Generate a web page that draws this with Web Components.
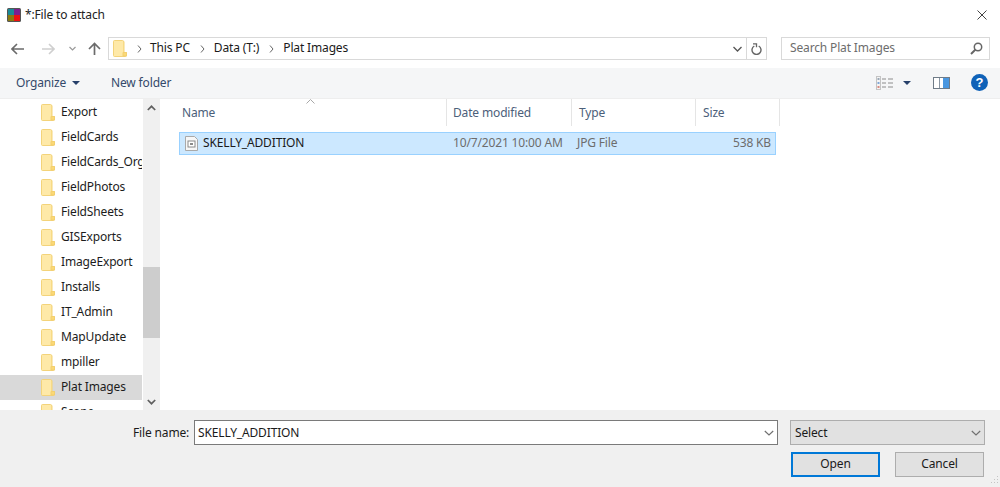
<!DOCTYPE html>
<html>
<head>
<meta charset="utf-8">
<title>File to attach</title>
<style>
  html, body { margin: 0; padding: 0; background: #fff; }
  body { font: 12px "Noto Sans", "Open Sans", sans-serif; letter-spacing: -0.15px; color: #1a1a1a; overflow: hidden; }
</style>
</head>
<body>
<file-dialog>
  <title-bar slot="title">*:File to attach</title-bar>
  <nav-bar slot="nav"></nav-bar>
  <tool-bar slot="tools"></tool-bar>
  <folder-tree slot="tree">
    <tree-item>Export</tree-item>
    <tree-item>FieldCards</tree-item>
    <tree-item>FieldCards_Org</tree-item>
    <tree-item>FieldPhotos</tree-item>
    <tree-item>FieldSheets</tree-item>
    <tree-item>GISExports</tree-item>
    <tree-item>ImageExport</tree-item>
    <tree-item>Installs</tree-item>
    <tree-item>IT_Admin</tree-item>
    <tree-item>MapUpdate</tree-item>
    <tree-item>mpiller</tree-item>
    <tree-item selected>Plat Images</tree-item>
    <tree-item>Scope</tree-item>
  </folder-tree>
  <file-list slot="list">
    <file-row name="SKELLY_ADDITION" date="10/7/2021 10:00 AM" type="JPG File" size="538 KB"></file-row>
  </file-list>
  <dialog-footer slot="footer"></dialog-footer>
</file-dialog>

<script>
const FOLDER = `<svg width="14" height="17" viewBox="0 0 14 17"><path d="M.5 1.500a1 1 0 0 1 1-1h8l1.500 1v11h2.500v3a1 1 0 0 1-1 1h-11a1 1 0 0 1-1-1z" fill="#fde38f" stroke="#f3d37a"/><path d="M1 1h9v11.500h-.5V16H1z" fill="#fee9a8"/><path d="M10 12.500h3.500V16H10z" fill="#fbd976" stroke="#f0cb68" stroke-width=".6"/></svg>`;

class FileDialog extends HTMLElement {
  connectedCallback() {
    this.attachShadow({ mode: 'open' });
    this.shadowRoot.innerHTML = `
      <style>
        :host { display: flex; flex-direction: column; width: 1000px; height: 487px; overflow: hidden; background: #fff; }
        .main { display: flex; height: 312px; overflow: hidden; }
      </style>
      <slot name="title"></slot>
      <slot name="nav"></slot>
      <slot name="tools"></slot>
      <div class="main">
        <slot name="tree"></slot>
        <slot name="list"></slot>
      </div>
      <slot name="footer"></slot>`;
  }
}

class TitleBar extends HTMLElement {
  connectedCallback() {
    this.attachShadow({ mode: 'open' });
    this.shadowRoot.innerHTML = `
      <style>
        :host { display: flex; align-items: center; height: 30px; padding: 0 13px 0 7px; box-sizing: border-box; color: #222; }
        svg { display: block; }
        .logo { margin-right: 4px; }
        .text { flex: 1; }
      </style>
      <svg class="logo" width="14" height="14" viewBox="0 0 14 14">
        <rect width="14" height="14" rx="1.500" fill="#555"/>
        <rect x="1" y="1" width="6" height="6" fill="#1b8a96"/>
        <rect x="7" y="1" width="6" height="6" fill="#7d1f8e"/>
        <rect x="1" y="7" width="6" height="6" fill="#8a7a10"/>
        <rect x="7" y="7" width="6" height="6" fill="#ee1111"/>
      </svg>
      <span class="text"><slot></slot></span>
      <svg width="10" height="10" viewBox="0 0 10 10"><path d="M.5.5l9 9M9.500.5l-9 9" stroke="#444" fill="none"/></svg>`;
  }
}

class NavBar extends HTMLElement {
  connectedCallback() {
    this.attachShadow({ mode: 'open' });
    const sep = `<svg class="sep" width="5" height="8" viewBox="0 0 5 8"><path d="M1 .5l3 3.500-3 3.500" fill="none" stroke="#666"/></svg>`;
    this.shadowRoot.innerHTML = `
      <style>
        :host { display: flex; align-items: center; height: 38px; padding: 0 10px 0 11px; }
        svg { display: block; flex: none; }
        .arrows { display: flex; align-items: center; width: 97px; flex: none; }
        .box { display: flex; align-items: center; box-sizing: border-box; height: 23px; border: 1px solid #d9d9d9; background: #fff; color: #1a1a1a; }
        .addr { flex: 1; padding-left: 4px; margin-right: 14px; }
        .crumbs { flex: 1; display: flex; align-items: center; }
        .box span { padding-bottom: 2px; }
        .sep { margin: 0 9px 0 10px; }
        .sep.first { margin-right: 8px; }
        .drop { width: 26px; display: flex; justify-content: flex-end; padding-right: 4px; box-sizing: border-box; }
        .refresh { width: 19px; height: 21px; border-left: 1px solid #d9d9d9; display: flex; align-items: center; justify-content: center; }
        .search { width: 209px; flex: none; padding: 0 6px 0 8px; color: #6d6d6d; justify-content: space-between; }
      </style>
      <div class="arrows">
        <svg width="13" height="12" viewBox="0 0 13 12" style="margin-right:18px"><path d="M6 1L1 6l5 5M1 6h12" fill="none" stroke="#6b6b6b" stroke-width="1.600"/></svg>
        <svg width="13" height="12" viewBox="0 0 13 12" style="margin-right:14px"><path d="M7 1l5 5-5 5M12 6H0" fill="none" stroke="#cfcfcf" stroke-width="1.600"/></svg>
        <svg width="7" height="5" viewBox="0 0 7 5" style="margin-right:12px"><path d="M.5 1l3 3 3-3" fill="none" stroke="#9a9a9a" stroke-width="1.200"/></svg>
        <svg width="13" height="13" viewBox="0 0 13 13"><path d="M1 7l5.500-5.500L12 7M6.500 1.500V13" fill="none" stroke="#6b6b6b" stroke-width="1.700"/></svg>
      </div>
      <div class="box addr">
        <div class="crumbs">
          ${FOLDER}${sep.replace('class="sep"', 'class="sep first"')}<span>This PC</span>${sep}<span>Data (T:)</span>${sep}<span>Plat Images</span>
        </div>
        <div class="drop"><svg width="9" height="6" viewBox="0 0 9 6"><path d="M.5 1l4 4 4-4" fill="none" stroke="#555" stroke-width="1.300"/></svg></div>
        <div class="refresh"><svg width="11" height="12" viewBox="0 0 11 12"><path d="M3.300 3a4.500 4.500 0 1 0 4.400 0" fill="none" stroke="#666" stroke-width="1.400"/><path d="M2 .8h3.500v3.500" fill="none" stroke="#666" stroke-width="1.300"/></svg></div>
      </div>
      <div class="box search">
        <span>Search Plat Images</span>
        <svg width="13" height="13" viewBox="0 0 13 13"><circle cx="8" cy="5" r="3.700" fill="none" stroke="#666" stroke-width="1.500"/><path d="M5.500 7.500L1 12" stroke="#666" stroke-width="2"/></svg>
      </div>`;
  }
}

class ToolBar extends HTMLElement {
  connectedCallback() {
    this.attachShadow({ mode: 'open' });
    this.shadowRoot.innerHTML = `
      <style>
        :host { display: flex; align-items: center; height: 30px; padding: 0 12px 0 16px; background: #f5f6f7; border-bottom: 1px solid #eeeeee; color: #34496a; }
        svg { display: block; flex: none; }
        .org { display: flex; align-items: center; width: 95px; }
        .org svg { margin-left: 6px; }
        .new { flex: 1; }
        .caret { margin: 0 22px 0 10px; }
        .pane { margin-right: 21px; }
      </style>
      <div class="org"><span>Organize</span><svg width="8" height="4" viewBox="0 0 8 4"><path d="M0 0h8L4 4z" fill="#26406a"/></svg></div>
      <span class="new">New folder</span>
      <svg width="17" height="14" viewBox="0 0 17 14">
        <rect x=".5" y=".5" width="4" height="13" fill="#f4f4f4" stroke="#c4c4c4"/>
        <rect x="1.500" y="2" width="2" height="2" fill="#9aa7b5"/><rect x="1.500" y="6" width="2" height="2" fill="#7fa6d6"/><rect x="1.500" y="10" width="2" height="2" fill="#d98a80"/>
        <path d="M6 3h4M12 3h5M6 7h4M12 7h5M6 11h4M12 11h5" stroke="#8c8c8c"/>
      </svg>
      <svg class="caret" width="8" height="4" viewBox="0 0 8 4"><path d="M0 0h8L4 4z" fill="#26406a"/></svg>
      <svg class="pane" width="17" height="12" viewBox="0 0 17 12">
        <rect x=".5" y=".5" width="16" height="11" fill="#fff" stroke="#6f7b87"/>
        <rect x="6" y="1" width="1" height="10" fill="#8b97a3"/>
        <rect x="10" y="1" width="6" height="10" fill="#4a97e0"/>
      </svg>
      <svg width="17" height="17" viewBox="0 0 17 17"><circle cx="8.500" cy="8.500" r="8.500" fill="#0f62b8"/><text x="8.500" y="13" text-anchor="middle" font-family="Liberation Sans, sans-serif" font-weight="700" font-size="13" fill="#fff">?</text></svg>`;
  }
}

class FolderTree extends HTMLElement {
  connectedCallback() {
    this.attachShadow({ mode: 'open' });
    this.shadowRoot.innerHTML = `
      <style>
        :host { display: flex; flex: none; width: 160px; height: 312px; overflow: hidden; }
        .items { width: 142px; padding-top: 1px; overflow: hidden; flex: none; }
        .bar { width: 17px; flex: none; background: #f0f0f0; display: flex; flex-direction: column; align-items: center; margin-left: 1px; }
        .track { flex: 1; width: 100%; padding-top: 150px; box-sizing: border-box; }
        .thumb { height: 71px; background: #cdcdcd; }
        .btn { height: 18px; flex: none; display: flex; align-items: center; justify-content: center; }
        svg { display: block; }
      </style>
      <div class="items"><slot></slot></div>
      <div class="bar">
        <div class="btn"><svg width="9" height="6" viewBox="0 0 9 6"><path d="M.8 5l3.700-3.700L8.200 5" fill="none" stroke="#606060" stroke-width="1.700"/></svg></div>
        <div class="track"><div class="thumb"></div></div>
        <div class="btn"><svg width="9" height="6" viewBox="0 0 9 6"><path d="M.8 1l3.700 3.700L8.200 1" fill="none" stroke="#606060" stroke-width="1.700"/></svg></div>
      </div>`;
  }
}

class TreeItem extends HTMLElement {
  connectedCallback() {
    this.attachShadow({ mode: 'open' });
    this.shadowRoot.innerHTML = `
      <style>
        :host { display: flex; align-items: center; height: 25px; padding-left: 41px; white-space: nowrap; overflow: hidden; color: #1c1c1c; }
        :host([selected]) { background: #d9d9d9; }
        svg { display: block; flex: none; margin-right: 6px; }
        span { padding-bottom: 2px; }
      </style>
      ${FOLDER}<span><slot></slot></span>`;
  }
}

class FileList extends HTMLElement {
  connectedCallback() {
    this.attachShadow({ mode: 'open' });
    this.shadowRoot.innerHTML = `
      <style>
        :host { display: block; flex: 1; height: 312px; background: #fff; }
        .head { display: flex; height: 28px; color: #4c607a; position: relative; }
        .col { box-sizing: border-box; border-right: 1px solid #e5e5e5; padding: 5px 0 0 7px; height: 27px; }
        .name { width: 287px; padding-left: 22px; }
        .date { width: 125px; padding-left: 6px; }
        .type { width: 124px; }
        .size { width: 84px; }
        .sort { position: absolute; left: 146px; top: 0; display: block; }
        .rows { padding: 5px 0 0 19px; }
      </style>
      <div class="head">
        <div class="col name">Name</div>
        <div class="col date">Date modified</div>
        <div class="col type">Type</div>
        <div class="col size">Size</div>
        <svg class="sort" width="9" height="5" viewBox="0 0 9 5"><path d="M.5 4.500l4-4 4 4" fill="none" stroke="#a8a8a8"/></svg>
      </div>
      <div class="rows"><slot></slot></div>`;
  }
}

class FileRow extends HTMLElement {
  connectedCallback() {
    this.attachShadow({ mode: 'open' });
    this.shadowRoot.innerHTML = `
      <style>
        :host { display: flex; align-items: center; box-sizing: border-box; width: 597px; height: 23px; background: #cce8ff; border: 1px solid #99d1ff; white-space: nowrap; color: #6d6d6d; }
        svg { display: block; flex: none; margin: 0 5px 0 5px; }
        span { padding-bottom: 2px; }
        .name { width: 250px; color: #1a1a1a; }
        .date { width: 124px; }
        .type { width: 100px; }
        .size { width: 94px; text-align: right; }
      </style>
      <svg width="13" height="15" viewBox="0 0 13 15">
        <path d="M.5.5h9l3 3v11H.5z" fill="#f7f7f7" stroke="#a9a9a9"/>
        <rect x="3" y="5" width="7" height="6" fill="#fff" stroke="#8a8a8a"/>
        <rect x="5" y="7" width="3" height="2" fill="#8a8a8a"/>
      </svg>
      <span class="name">${this.getAttribute('name')}</span>
      <span class="date">${this.getAttribute('date')}</span>
      <span class="type">${this.getAttribute('type')}</span>
      <span class="size">${this.getAttribute('size')}</span>`;
  }
}

class DialogFooter extends HTMLElement {
  connectedCallback() {
    this.attachShadow({ mode: 'open' });
    const chev = c => `<svg width="10" height="6" viewBox="0 0 10 6"><path d="M.8 1L5 5l4.200-4" fill="none" stroke="${c}" stroke-width="1.200"/></svg>`;
    this.shadowRoot.innerHTML = `
      <style>
        :host { display: grid; grid-template-columns: 56px 584px 195px; grid-template-rows: 25px 25px; column-gap: 5px; row-gap: 7px; align-content: start; height: 77px; box-sizing: border-box; padding: 10px 0 0 133px; background: #f0f0f0; color: #1a1a1a; position: relative; }
        .label { align-self: center; white-space: nowrap; }
        .input { display: flex; align-items: center; justify-content: space-between; box-sizing: border-box; border: 1px solid #7a7a7a; background: #fff; padding: 0 3px 0 3px; }
        .select { display: flex; align-items: center; justify-content: space-between; box-sizing: border-box; margin-left: 7px; border: 1px solid #adadad; background: #e1e1e1; padding: 0 3px 0 4px; width: 195px; }
        .buttons { grid-column: 3; display: flex; margin-left: 8px; width: 195px; gap: 15px; }
        .btn { flex: none; box-sizing: border-box; width: 89px; height: 25px; padding-bottom: 2px; display: flex; align-items: center; justify-content: center; background: #e1e1e1; border: 1px solid #adadad; }
        .primary { border: 2px solid #0078d7; }
        .grip { position: absolute; right: 1px; bottom: 1px; display: block; }
      </style>
      <span class="label">File name:</span>
      <div class="input"><span>SKELLY_ADDITION</span>${chev('#707070')}</div>
      <div class="select"><span>Select</span>${chev('#707070')}</div>
      <div class="buttons">
        <div class="btn primary">Open</div>
        <div class="btn">Cancel</div>
      </div>
      <svg class="grip" width="12" height="12" viewBox="0 0 12 12"><path d="M10 2h1v1h-1zM7 5h1v1H7zM10 5h1v1h-1zM4 8h1v1H4zM7 8h1v1H7zM10 8h1v1h-1z" fill="#c4c4c4"/></svg>`;
  }
}

customElements.define('file-dialog', FileDialog);
customElements.define('title-bar', TitleBar);
customElements.define('nav-bar', NavBar);
customElements.define('tool-bar', ToolBar);
customElements.define('folder-tree', FolderTree);
customElements.define('tree-item', TreeItem);
customElements.define('file-list', FileList);
customElements.define('file-row', FileRow);
customElements.define('dialog-footer', DialogFooter);
</script>
</body>
</html>
